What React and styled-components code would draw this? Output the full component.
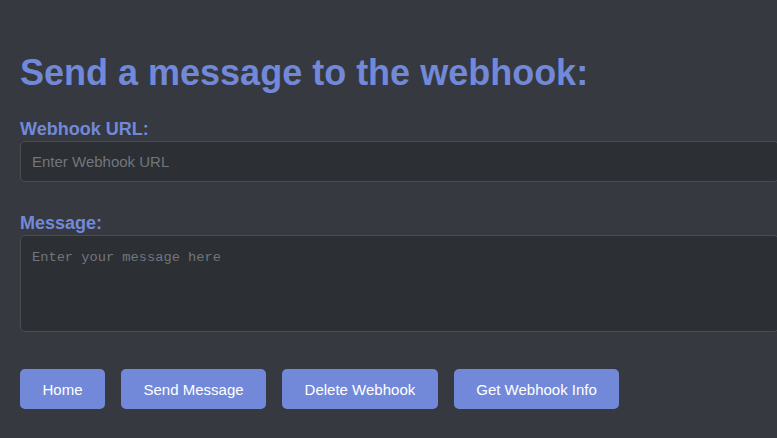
import styled, { createGlobalStyle } from "styled-components";

const GlobalStyle = createGlobalStyle`
  html, body {
    margin: 0;
    padding: 0;
    background: #36393f;
    overflow: hidden;
  }
  body {
    font-family: "Liberation Sans", Arial, sans-serif;
  }
`;

const Page = styled.div`
  padding: 52px 20px 30px;
  min-height: 438px;
  box-sizing: border-box;
`;

const Title = styled.h1`
  margin: 0 0 25px;
  font-size: 36px;
  font-weight: bold;
  color: #7289da;
`;

const Label = styled.label`
  display: block;
  font-size: 18px;
  font-weight: bold;
  color: #7289da;
  margin-bottom: 1px;
`;

const Input = styled.input`
  display: block;
  box-sizing: border-box;
  width: calc(100% + 22px);
  height: 41px;
  padding: 0 11px;
  margin-bottom: 31px;
  background: #2c2f33;
  border: 1px solid #4a4d53;
  border-radius: 5px;
  color: #dcddde;
  font-family: "Liberation Sans", Arial, sans-serif;
  font-size: 15px;
  outline: none;

  &::placeholder {
    color: #72767d;
  }
`;

const TextArea = styled.textarea`
  display: block;
  box-sizing: border-box;
  width: calc(100% + 22px);
  height: 97px;
  padding: 14px 11px 10px;
  margin: 0 0 37px;
  background: #2c2f33;
  border: 1px solid #4a4d53;
  border-radius: 5px;
  color: #dcddde;
  font-family: "Liberation Mono", monospace;
  font-size: 13.7px;
  resize: none;
  outline: none;

  &::placeholder {
    color: #72767d;
  }
`;

const Buttons = styled.div`
  display: flex;
  gap: 16px;
`;

const Button = styled.button`
  height: 40px;
  padding: 0 22.5px;
  background: #7289da;
  color: #fff;
  border: none;
  border-radius: 5px;
  font-family: "Liberation Sans", Arial, sans-serif;
  font-size: 15px;
  cursor: pointer;
`;

const App = () => {
  return (
    <Page>
      <GlobalStyle />
      <Title>Send a message to the webhook:</Title>
      <Label htmlFor="url">Webhook URL:</Label>
      <Input id="url" placeholder="Enter Webhook URL" />
      <Label htmlFor="msg">Message:</Label>
      <TextArea id="msg" placeholder="Enter your message here" />
      <Buttons>
        <Button>Home</Button>
        <Button>Send Message</Button>
        <Button>Delete Webhook</Button>
        <Button>Get Webhook Info</Button>
      </Buttons>
    </Page>
  );
};

export default App;
